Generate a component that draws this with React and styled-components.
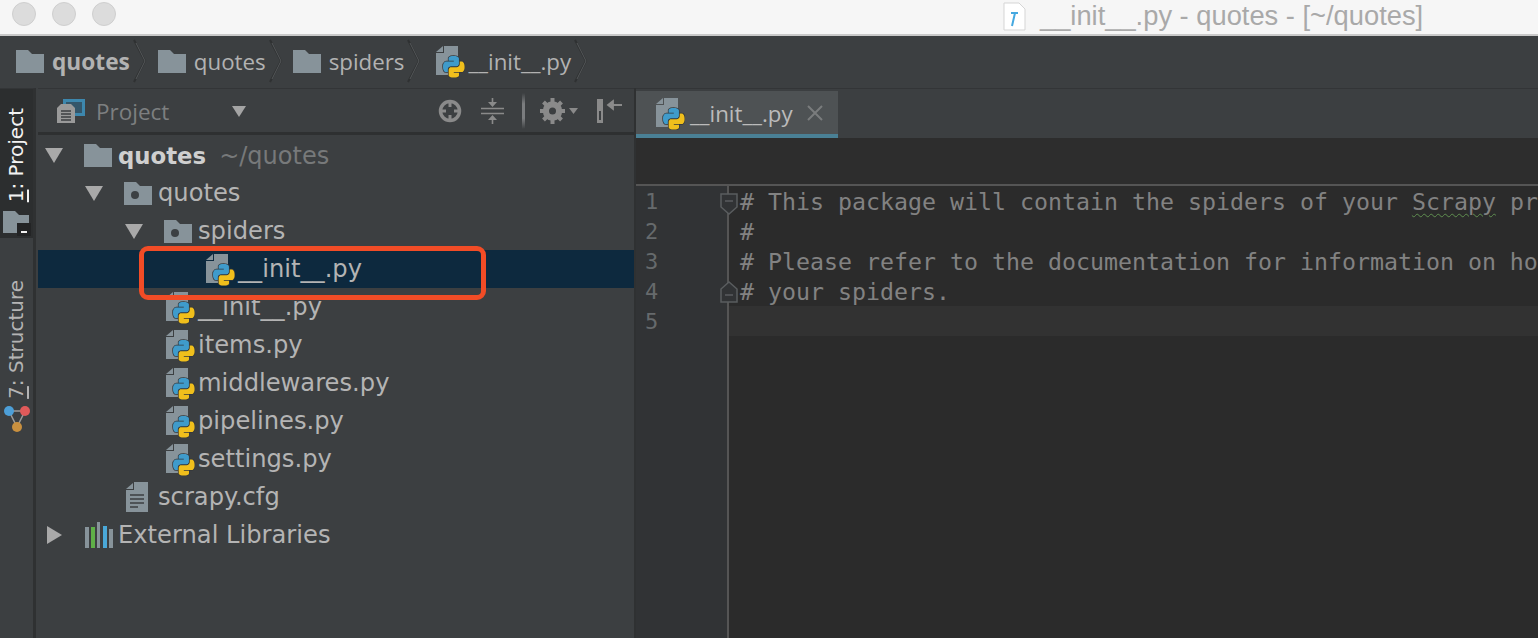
import styled, { createGlobalStyle } from "styled-components";

const GlobalStyle = createGlobalStyle`
  html, body {
    margin: 0;
    height: 100%;
    overflow: hidden;
    background: #3c3f41;
  }
  #root {
    height: 100%;
  }
`;

const Window = styled.div`
  display: flex;
  flex-direction: column;
  width: 1538px;
  height: 638px;
  font-family: "DejaVu Sans", sans-serif;
  overflow: hidden;
`;

const TitleBar = styled.div`
  display: flex;
  align-items: flex-start;
  flex: 0 0 36px;
  box-sizing: border-box;
  background: #f6f6f6;
  border-bottom: 2px solid #c9c9c9;
  padding: 2px 0 0 12px;
`;

const Light = styled.div`
  width: 24px;
  height: 24px;
  border-radius: 50%;
  background: #dcdcdc;
  border: 1px solid #cfcfcf;
  box-sizing: border-box;
  margin-right: 16px;
`;

const TitleText = styled.div`
  display: flex;
  align-items: center;
  gap: 14px;
  margin-left: 871px;
  margin-top: -1px;
  height: 30px;
  line-height: 28px;
  font-family: "Liberation Sans", sans-serif;
  font-size: 27.3px;
  color: #a9a9a9;
  white-space: nowrap;
`;

const NavBar = styled.div`
  display: flex;
  align-items: center;
  flex: 0 0 52px;
  box-sizing: border-box;
  background: #3c3f41;
  padding: 0 0 2px 16px;
`;

const Crumb = styled.div`
  display: flex;
  align-items: center;
  gap: ${(p) => p.$gap ?? 8}px;
  margin-left: ${(p) => p.$left ?? 0}px;
  font-family: "Open Sans", sans-serif;
  font-size: ${(p) => (p.$bold ? 22.7 : 22.3)}px;
  font-weight: ${(p) => (p.$bold ? 700 : 400)};
  color: #b2b2b2;
  white-space: nowrap;
`;

const Body = styled.div`
  display: flex;
  flex: 1;
  min-height: 0;
`;

const SideStrip = styled.div`
  display: flex;
  flex-direction: column;
  flex: 0 0 33px;
  background: #3c3f41;
  border-right: 3px solid #2f3132;
  border-top: 1px solid #333537;
`;

const SideTab = styled.div`
  display: flex;
  flex-direction: column;
  align-items: center;
  flex: none;
  height: ${(p) => p.$height}px;
  box-sizing: border-box;
  padding-top: ${(p) => p.$top}px;
  gap: ${(p) => (p.$active ? 9 : 7)}px;
  background: ${(p) => (p.$active ? "#2c2e2f" : "transparent")};
`;

const SideLabel = styled.div`
  flex: none;
  writing-mode: vertical-rl;
  transform: rotate(180deg);
  font-size: 20px;
  line-height: 33px;
  white-space: nowrap;
  color: ${(p) => (p.$active ? "#f2f2f2" : "#b4b4b4")};
`;

const ProjectPanel = styled.div`
  display: flex;
  flex-direction: column;
  flex: 0 0 600px;
  box-sizing: border-box;
  padding-left: 2px;
  background: #3c3f41;
  border-right: 2px solid #2f3132;
`;

const PanelHeader = styled.div`
  display: flex;
  align-items: center;
  flex: 0 0 47px;
  box-sizing: border-box;
  padding: 1px 0 0 19px;
  border-top: 1px solid #333537;
  border-bottom: 3px solid #2e3031;
`;

const PanelTitle = styled.div`
  width: 136px;
  margin-left: 11px;
  font-family: "Open Sans", sans-serif;
  font-size: 22.5px;
  color: #7d7f80;
`;

const ToolIcon = styled.svg`
  display: block;
  flex: none;
  margin-left: ${(p) => p.$left ?? 0}px;
`;

const ToolSeparator = styled.div`
  flex: none;
  width: 3px;
  height: 36px;
  margin-left: 17px;
  background: linear-gradient(to bottom, #3c3f41, #7b7d7f 30%, #7b7d7f 70%, #3c3f41);
`;

const Tree = styled.div`
  display: flex;
  flex-direction: column;
  padding-top: 1px;
`;

const Row = styled.div`
  display: flex;
  align-items: center;
  height: 38px;
  padding-left: ${(p) => p.$indent}px;
  background: ${(p) => (p.$selected ? "#0d293e" : "transparent")};
`;

const Arrow = styled.div`
  flex: 0 0 ${(p) => p.$width}px;
`;

const RowText = styled.span`
  margin-left: ${(p) => p.$gap}px;
  padding-top: ${(p) => (p.$bold ? 2 : 0)}px;
  font-size: ${(p) => (p.$bold ? 22.8 : 24.2)}px;
  font-weight: ${(p) => (p.$bold ? 700 : 400)};
  color: ${(p) => (p.$bright ? "#cfcfcf" : "#b4b4b4")};
  white-space: nowrap;
`;

const Muted = styled.span`
  margin-left: 13px;
  padding-top: 2px;
  font-size: 24px;
  color: #77797a;
  white-space: nowrap;
`;

const Highlight = styled.div`
  position: absolute;
  left: 139px;
  top: 246px;
  width: 347px;
  height: 54px;
  box-sizing: border-box;
  border: 5px solid #f24c26;
  border-radius: 9px;
`;

const EditorPane = styled.div`
  display: flex;
  flex-direction: column;
  flex: 1;
  min-width: 0;
  background: #2b2b2b;
`;

const TabBar = styled.div`
  display: flex;
  flex: 0 0 50px;
  box-sizing: border-box;
  padding-top: 2px;
  background: #3c3f41;
  border-top: 1px solid #333537;
`;

const FileTab = styled.div`
  display: flex;
  align-items: center;
  width: 202px;
  box-sizing: border-box;
  padding: 1px 0 0 20px;
  background: #4e5254;
  border-bottom: 4px solid #4a8095;
  font-family: "Open Sans", sans-serif;
  font-size: 22.3px;
  color: #bbbbbb;
  white-space: nowrap;
`;

const TabName = styled.span`
  margin-left: 5px;
`;

const TabClose = styled.svg`
  display: block;
  margin-left: 14px;
`;

const Breadcrumbs = styled.div`
  flex: 0 0 46px;
  background: #2d2d2d;
  border-bottom: 2px solid #555555;
`;

const EditorBody = styled.div`
  display: flex;
  flex: 1;
  min-height: 0;
`;

const Gutter = styled.div`
  flex: 0 0 93px;
  box-sizing: border-box;
  background: #313335;
  border-right: 2px solid #555555;
`;

const LineNumber = styled.div`
  height: 30px;
  line-height: 32px;
  padding-left: 9px;
  font-family: "DejaVu Sans Mono", monospace;
  font-size: 22px;
  color: #666a6c;
`;

const Code = styled.div`
  position: relative;
  flex: 1;
  min-width: 0;
`;

const CodeLine = styled.div`
  height: 30px;
  line-height: 32px;
  padding-left: 11px;
  font-family: "DejaVu Sans Mono", monospace;
  font-size: 23.25px;
  color: #828282;
  white-space: pre;
  background: ${(p) => (p.$current ? "#323232" : "transparent")};
`;

const Typo = styled.span`
  text-decoration: underline wavy #5f8f4f 1px;
  text-underline-offset: 3px;
`;

const FoldMark = styled.svg`
  position: absolute;
  left: -9px;
  top: ${(p) => p.$top}px;
`;

const FolderIcon = ({ dot }) => (
  <svg width="28" height="24" viewBox="0 0 28 24" style={{ display: "block", flex: "none" }}>
    <path d="M0 1h12l4 4h12v19H0z" fill="#87939a" />
    {dot && <circle cx="11" cy="14" r="4" fill="#3c4043" />}
  </svg>
);

const SNAKE =
  "M11.9 0C5.8 0 6.2 2.6 6.2 2.6v2.7h5.8v.8H3.9S0 5.7 0 11.9s3.4 6 3.4 6h2v-2.9s-.1-3.4 3.4-3.4h5.7s3.2.05 3.2-3.1V3.2S18.3 0 11.9 0z";

const PythonFile = () => (
  <svg width="29" height="34" viewBox="0 0 29 34" style={{ display: "block", flex: "none" }}>
    <path d="M8 2h14v29H0V9h8z" fill="#87939a" />
    <path d="M0 8l7-6v6z" fill="#87939a" />
    <g transform="translate(7 12) scale(0.9)">
      <g stroke="#33373a" strokeWidth="1.6" paintOrder="stroke">
        <path d={SNAKE} fill="#3f9bcb" />
        <path d={SNAKE} fill="#f0bf1c" transform="rotate(180 12 12)" />
      </g>
    </g>
  </svg>
);

const TextFile = () => (
  <svg width="22" height="30" viewBox="0 0 22 30" style={{ display: "block", flex: "none" }}>
    <path d="M8 0h14v30H0V8h8z" fill="#87939a" />
    <path d="M0 7l7-6v6z" fill="#87939a" />
    <path d="M4 13h14M4 17h14M4 21h14M4 25h8" stroke="#3c3f41" strokeWidth="1.5" />
  </svg>
);

const LibrariesIcon = () => (
  <svg width="28" height="26" viewBox="0 0 28 26" style={{ display: "block", flex: "none" }}>
    <path d="M0 5h4v21H0z" fill="#87939a" />
    <path d="M6 5h4v21H6z" fill="#5fb048" />
    <path d="M12 0h3v26h-3z" fill="#87939a" />
    <path d="M18 4h4v22h-4z" fill="#4aa8d8" />
    <path d="M24 7h4v19h-4z" fill="#87939a" />
  </svg>
);

const TreeArrow = ({ open }) => (
  <svg width="18" height="18" viewBox="0 0 18 18" style={{ display: "block" }}>
    {open ? <path d="M0 2h18L9 17z" fill="#a9a9a9" /> : <path d="M1 0l15 9-15 9z" fill="#a9a9a9" />}
  </svg>
);

const Chevron = () => (
  <svg width="14" height="44" viewBox="0 0 14 44" style={{ display: "block", flex: "none", marginLeft: 3 }}>
    <path d="M1 1l11 21L1 43" fill="none" stroke="#2f3132" strokeWidth="2" />
    <path d="M3 4l9 18-9 18" fill="none" stroke="#55585a" strokeWidth="1" />
  </svg>
);

const tree = [
  { indent: 7, arrow: "open", icon: "root", gap: 6, name: "quotes", bold: true, bright: true, extra: "~/quotes" },
  { indent: 47, arrow: "open", icon: "package", gap: 6, name: "quotes" },
  { indent: 87, arrow: "open", icon: "package", gap: 6, name: "spiders" },
  { indent: 168, icon: "py", gap: 3, name: "__init__.py", selected: true },
  { indent: 128, icon: "py", gap: 3, name: "__init__.py" },
  { indent: 128, icon: "py", gap: 3, name: "items.py" },
  { indent: 128, icon: "py", gap: 3, name: "middlewares.py" },
  { indent: 128, icon: "py", gap: 3, name: "pipelines.py" },
  { indent: 128, icon: "py", gap: 3, name: "settings.py" },
  { indent: 88, icon: "text", gap: 10, name: "scrapy.cfg" },
  { indent: 8, arrow: "closed", icon: "libs", gap: 5, name: "External Libraries" },
];

const rowIcons = {
  root: <FolderIcon />,
  package: <FolderIcon dot />,
  py: <PythonFile />,
  text: <TextFile />,
  libs: <LibrariesIcon />,
};

const App = () => (
  <Window>
    <GlobalStyle />
    <TitleBar>
      <Light />
      <Light />
      <Light />
      <TitleText>
        <svg width="23" height="29" viewBox="0 0 23 29" style={{ display: "block" }}>
          <path d="M1 1h15l6 6v21H1z" fill="#fff" stroke="#d5d5d5" />
          <path d="M8 11h7M12 11l-3 13" stroke="#45a8e0" strokeWidth="2" fill="none" />
        </svg>
        <span>__init__.py - quotes - [~/quotes]</span>
      </TitleText>
    </TitleBar>
    <NavBar>
      <Crumb $bold>
        <FolderIcon />
        quotes
      </Crumb>
      <Chevron />
      <Crumb $left={11}>
        <FolderIcon />
        quotes
      </Crumb>
      <Chevron />
      <Crumb $left={10}>
        <FolderIcon />
        spiders
      </Crumb>
      <Chevron />
      <Crumb $gap={3} $left={15}>
        <PythonFile />
        __init__.py
      </Crumb>
      <Chevron />
    </NavBar>
    <Body>
      <SideStrip>
        <SideTab $active $height={149} $top={19}>
          <SideLabel $active>
            <u>1</u>: Project
          </SideLabel>
          <svg width="28" height="25" viewBox="0 0 28 25" style={{ display: "block", flex: "none" }}>
            <path d="M0 0h12l4 4h10v18H0z" fill="#87939a" />
            <path d="M14 12h14v13H14z" fill="#232425" />
            <path d="M18 20h6v2h-6z" fill="#f2f2f2" />
          </svg>
        </SideTab>
        <SideTab $height={200} $top={42}>
          <SideLabel>
            <u>7</u>: Structure
          </SideLabel>
          <svg width="26" height="27" viewBox="0 0 26 27" style={{ display: "block", flex: "none" }}>
            <path d="M5 5h16L13 21z" fill="none" stroke="#9a9a9a" strokeWidth="1.5" />
            <circle cx="5" cy="5" r="5" fill="#4d9fd8" />
            <circle cx="21" cy="5" r="5" fill="#e05a5a" />
            <circle cx="13" cy="21" r="5" fill="#c9903f" />
          </svg>
        </SideTab>
      </SideStrip>
      <ProjectPanel>
        <PanelHeader>
          <svg width="28" height="24" viewBox="0 0 28 24" style={{ display: "block", flex: "none" }}>
            <path d="M6 0h22v17H6z" fill="#3d87ad" />
            <path d="M9 3h16v11H9z" fill="#34566a" />
            <path d="M4 5h10l4 4v15H0V9z" fill="#9a9a9a" />
            <path d="M4 12h10M4 15h10M4 18h10M4 21h10" stroke="#3c3f41" strokeWidth="1.3" />
          </svg>
          <PanelTitle>Project</PanelTitle>
          <ToolIcon width="14" height="11" viewBox="0 0 14 11">
            <path d="M0 0h14L7 11z" fill="#a4a4a4" />
          </ToolIcon>
          <ToolIcon width="24" height="24" viewBox="0 0 24 24" $left={192}>
            <circle cx="12" cy="12" r="9.5" fill="none" stroke="#8a8a8a" strokeWidth="3.5" />
            <path d="M12 1v7M12 16v7M1 12h7M16 12h7" stroke="#8a8a8a" strokeWidth="3" />
          </ToolIcon>
          <ToolIcon width="25" height="26" viewBox="0 0 25 26" $left={18}>
            <path d="M1 10.5h23M1 15.5h23M12.5 0v7M12.5 19v7" stroke="#8a8a8a" strokeWidth="1.6" />
            <path d="M8 4h9l-4.500 5zM8 22h9l-4.500-5z" fill="#8a8a8a" />
          </ToolIcon>
          <ToolSeparator />
          <ToolIcon width="38" height="26" viewBox="0 0 38 26" $left={15}>
            <circle cx="12.500" cy="13" r="7" fill="none" stroke="#8a8a8a" strokeWidth="5.500" />
            <path d="M12.500 0v26M0 13h25M3.500 4l18 18M21.500 4l-18 18" stroke="#8a8a8a" strokeWidth="4" />
            <circle cx="12.500" cy="13" r="3.500" fill="#3c3f41" />
            <path d="M29 10h9l-4.500 6z" fill="#8a8a8a" />
          </ToolIcon>
          <ToolIcon width="26" height="26" viewBox="0 0 26 26" $left={18}>
            <path d="M1 1h6v24H1z" fill="#8a8a8a" />
            <path d="M3 13h2v9H3z" fill="#3c3f41" />
            <path d="M12 7h14M12 7l5-4v8z" stroke="#8a8a8a" strokeWidth="1.8" fill="#8a8a8a" />
          </ToolIcon>
        </PanelHeader>
        <Tree>
          {tree.map((row, i) => (
            <Row key={i} $indent={row.indent} $selected={row.selected}>
              {row.arrow && (
                <Arrow $width={39}>
                  <TreeArrow open={row.arrow === "open"} />
                </Arrow>
              )}
              {rowIcons[row.icon]}
              <RowText $gap={row.gap} $bold={row.bold} $bright={row.bright}>
                {row.name}
              </RowText>
              {row.extra && <Muted>{row.extra}</Muted>}
            </Row>
          ))}
        </Tree>
      </ProjectPanel>
      <EditorPane>
        <TabBar>
          <FileTab>
            <PythonFile />
            <TabName>__init__.py</TabName>
            <TabClose width="16" height="16" viewBox="0 0 16 16">
              <path d="M1 1l14 14M15 1L1 15" stroke="#7a7c7d" strokeWidth="2" />
            </TabClose>
          </FileTab>
        </TabBar>
        <Breadcrumbs />
        <EditorBody>
          <Gutter>
            {[1, 2, 3, 4, 5].map((n) => (
              <LineNumber key={n}>{n}</LineNumber>
            ))}
          </Gutter>
          <Code>
            <FoldMark $top={7} width="18" height="22" viewBox="0 0 18 22">
              <path d="M1 1h16v13l-8 7-8-7z" fill="#313335" stroke="#5a5d5f" strokeWidth="1.500" />
              <path d="M5 8h8" stroke="#5a5d5f" strokeWidth="1.500" />
            </FoldMark>
            <FoldMark $top={95} width="18" height="22" viewBox="0 0 18 22">
              <path d="M1 21h16V8L9 1 1 8z" fill="#313335" stroke="#5a5d5f" strokeWidth="1.500" />
              <path d="M5 14h8" stroke="#5a5d5f" strokeWidth="1.500" />
            </FoldMark>
            <CodeLine>
              # This package will contain the spiders of your <Typo>Scrapy</Typo> pr
            </CodeLine>
            <CodeLine>#</CodeLine>
            <CodeLine># Please refer to the documentation for information on ho</CodeLine>
            <CodeLine># your spiders.</CodeLine>
            <CodeLine $current> </CodeLine>
          </Code>
        </EditorBody>
      </EditorPane>
    </Body>
    <Highlight />
  </Window>
);

export default App;
